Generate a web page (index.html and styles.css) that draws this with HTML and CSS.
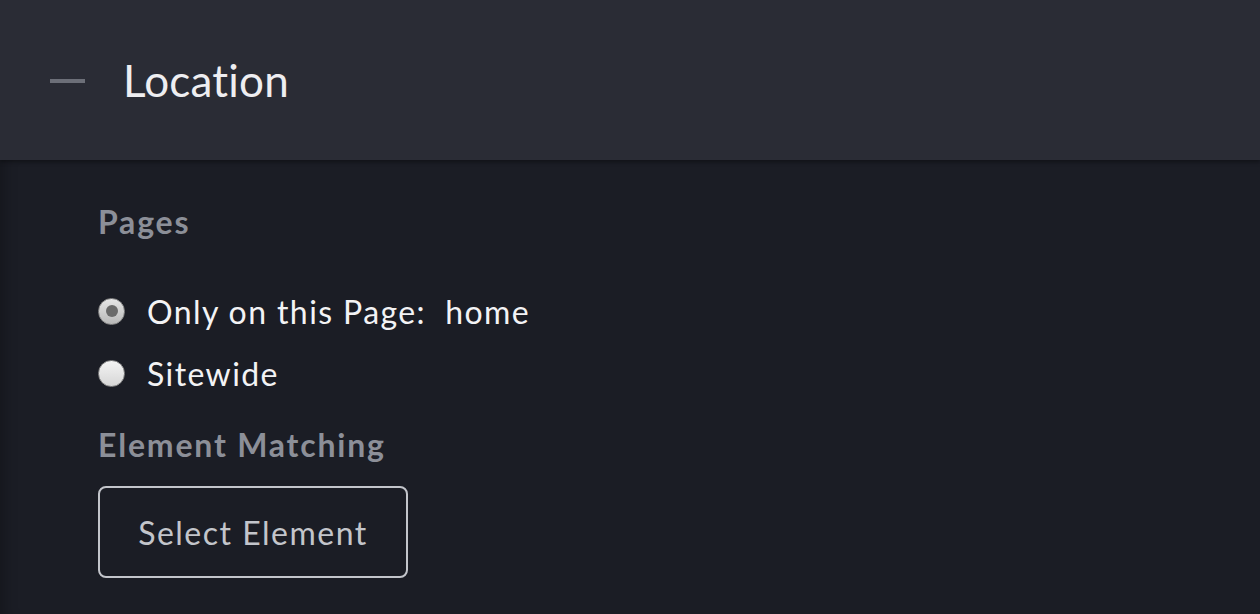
FILE: index.html
```html
<!DOCTYPE html>
<html>
<head>
<meta charset="utf-8">
<link rel="stylesheet" href="styles.css">
</head>
<body>
<div class="panel">
  <header class="panel-header">
    <span class="collapse-dash"></span>
    <h1 class="panel-title">Location</h1>
  </header>
  <section class="panel-body">
    <h2 class="field-label">Pages</h2>
    <div class="radio-group">
      <label class="radio-row">
        <span class="radio radio-checked"></span>
        <span class="radio-text">Only on this Page:&nbsp; home</span>
      </label>
      <label class="radio-row">
        <span class="radio"></span>
        <span class="radio-text">Sitewide</span>
      </label>
    </div>
    <h2 class="field-label label-matching">Element Matching</h2>
    <button class="select-btn">Select Element</button>
  </section>
</div>
</body>
</html>
```
FILE: styles.css
```css
html, body {
  margin: 0;
  padding: 0;
  height: 100%;
}
body {
  background: #1b1d25;
  font-family: "Lato", "Open Sans", sans-serif;
  overflow: hidden;
}
.panel {
  height: 100%;
  display: flex;
  flex-direction: column;
}
.panel-header {
  height: 160px;
  flex: 0 0 160px;
  background: #2a2c35;
  display: flex;
  align-items: center;
  padding-left: 50px;
  box-shadow: 0 2px 4px rgba(0,0,0,0.35);
  position: relative;
  z-index: 1;
}
.collapse-dash {
  width: 35px;
  height: 4px;
  background: #6c6f78;
  margin-right: 38px;
  margin-top: 2px;
}
.panel-title {
  margin: 0;
  font-weight: 400;
  font-size: 44px;
  color: #eeeef1;
  letter-spacing: 0.2px;
}
.panel-body {
  flex: 1;
  padding: 40px 0 0 98px;
  box-shadow: inset 14px 0 14px -10px rgba(0,0,0,0.25);
}
.field-label {
  margin: 0;
  font-weight: 700;
  font-size: 32px;
  color: #8c8f98;
  line-height: 44px;
  letter-spacing: 1.8px;
}
.radio-group {
  margin-top: 36px;
  display: flex;
  flex-direction: column;
}
.radio-row {
  display: flex;
  align-items: center;
  height: 62px;
}
.radio {
  width: 27px;
  height: 27px;
  box-sizing: border-box;
  border-radius: 50%;
  background: linear-gradient(#f4f4f4, #d6d6d6);
  border: 1px solid #8a8a8a;
  margin-right: 22px;
  position: relative;
}
.radio-checked {
  background: linear-gradient(#e6e6e6, #b8b8b8);
}
.radio-checked::after {
  content: "";
  position: absolute;
  left: 50%;
  top: 50%;
  width: 12px;
  height: 12px;
  margin: -6px 0 0 -6px;
  border-radius: 50%;
  background: #6a6a6a;
}
.radio-text {
  font-size: 32px;
  color: #f3f3f5;
  letter-spacing: 1.4px;
}
.label-matching {
  margin-top: 19px;
}
.select-btn {
  margin-top: 19px;
  width: 310px;
  height: 92px;
  background: transparent;
  border: 2px solid #c3c5cb;
  border-radius: 8px;
  color: #c3c5cb;
  font-family: inherit;
  font-size: 32px;
  letter-spacing: 1.5px;
  padding: 0;
}
```
